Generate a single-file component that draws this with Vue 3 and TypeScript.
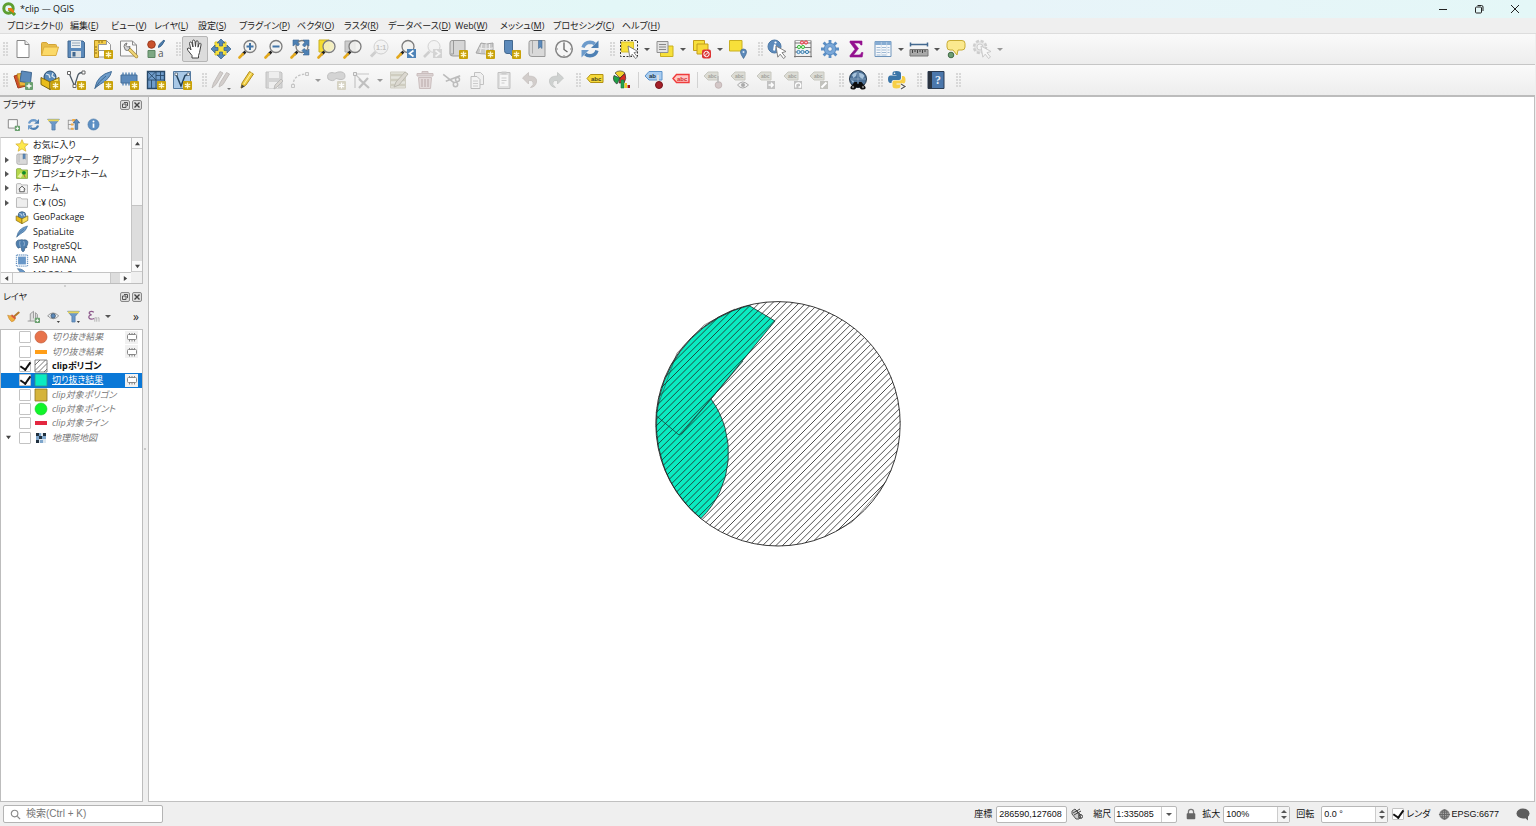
<script setup lang="ts">
import { ref } from 'vue'

interface Tool { icon: string; label: string; drop?: boolean; off?: boolean; on?: boolean }
interface Group { name: string; line?: boolean; tools: Tool[] }
interface Glyph { text: string; x: number; y: number; size: number; fill: string; family?: string; weight?: string }

const t = (icon: string, label: string, o: Partial<Tool> = {}): Tool => ({ icon, label, ...o })

const menus = [
  ['プロジェクト', 'J'], ['編集', 'E'], ['ビュー', 'V'], ['レイヤ', 'L'], ['設定', 'S'], ['プラグイン', 'P'], ['ベクタ', 'O'],
  ['ラスタ', 'R'], ['データベース', 'D'], ['Web', 'W'], ['メッシュ', 'M'], ['プロセシング', 'C'], ['ヘルプ', 'H'],
]

const bars: Group[][] = [
  [
    { name: 'file', tools: [t('new', '新規'), t('open', '開く'), t('save', '保存'), t('layout', '新規レイアウト'), t('manager', 'レイアウトマネージャ'), t('style', 'スタイルマネージャ')] },
    {
      name: 'nav', tools: [t('hand', '地図を移動', { on: true }), t('pansel', '選択部分に移動'), t('zin', '拡大'), t('zout', '縮小'), t('zfull', '全域表示'), t('zsel', '選択部分にズーム'),
        t('zlayer', 'レイヤにズーム'), t('znative', 'ネイティブ解像度', { off: true }), t('zlast', '前の表示'), t('znext', '次の表示', { off: true }), t('mapview', '新規地図ビュー'),
        t('view3d', '新規3Dビュー'), t('bookmark', '新規ブックマーク'), t('bookmarks', 'ブックマーク'), t('clock', '時系列'), t('refresh', '再読み込み')],
    },
    { name: 'sel', tools: [t('select', '地物選択', { drop: true }), t('selval', '値で選択', { drop: true }), t('desel', '選択解除', { drop: true }), t('selloc', '場所で選択')] },
    {
      name: 'attr', tools: [t('info', '地物情報'), t('abacus', 'フィールド計算機'), t('gear', 'ツールボックス'), t('sigma', '統計'), t('table', '属性テーブル', { drop: true }),
        t('ruler', '計測', { drop: true }), t('tip', '地図のヒント'), t('action', 'アクション', { drop: true, off: true })],
    },
  ],
  [
    { name: 'src', tools: [t('dsm', 'データソースマネージャ'), t('gpkg', '新規GeoPackage'), t('shp', '新規シェープファイル'), t('feather', '新規SpatiaLite'), t('memory', '新規一時レイヤ'), t('mesh', '新規メッシュ'), t('virtual', '新規仮想レイヤ')] },
    {
      name: 'edit', tools: [t('pencils', '現在の編集', { off: true }), t('pencil', '編集モード切替'), t('saveoff', '編集を保存', { off: true }), t('digit', 'デジタイズ', { drop: true, off: true }),
        t('addpoly', '地物を追加', { off: true }), t('vertex', '頂点ツール', { drop: true, off: true }), t('multi', '属性を変更', { off: true }), t('trash', '削除', { off: true }), t('cut', '切り取り', { off: true }),
        t('copy', 'コピー', { off: true }), t('paste', '貼り付け', { off: true }), t('undo', '元に戻す', { off: true }), t('redo', 'やり直し', { off: true })],
    },
    { name: 'lab', tools: [t('abc', 'ラベル'), t('diagram', 'ダイアグラム')] },
    { name: 'lab', line: true, tools: [t('abpin', 'ラベル固定'), t('abred', '未配置ラベル')] },
    { name: 'lab5', line: true, tools: [t('gpin', 'ラベルをピン', { off: true }), t('geye', 'ラベル表示', { off: true }), t('gmove', 'ラベル移動', { off: true }), t('grot', 'ラベル回転', { off: true }), t('gedit', 'ラベル変更', { off: true })] },
    { name: 'one', tools: [t('globe', 'メタサーチ')] },
    { name: 'one', tools: [t('python', 'Pythonコンソール')] },
    { name: 'one', tools: [t('help', 'ヘルプ')] },
    { name: 'none', tools: [] },
  ],
]

const grey: Glyph = { text: 'abc', x: 5, y: 8, size: 5, fill: '#a2a29b', weight: 'bold' }
const glyphs: Record<string, Glyph> = {
  style: { text: 'a', x: 12, y: 18, size: 10, fill: '#555', family: 'Open Sans' },
  znative: { text: '1:1', x: 7, y: 11, size: 7, fill: '#c2c2c2', weight: 'bold' },
  abc: { text: 'abc', x: 6, y: 11, size: 6, fill: '#4a4420', weight: 'bold' },
  abred: { text: 'abc', x: 6, y: 11, size: 6, fill: '#d42a2a', weight: 'bold' },
  abpin: { text: 'ab', x: 5, y: 8, size: 6, fill: '#223344', weight: 'bold' },
  gpin: grey, geye: grey, gmove: grey, grot: grey, gedit: grey,
  help: { text: '?', x: 9, y: 14, size: 12, fill: '#e2ebf5', family: 'Liberation Serif', weight: 'bold' },
}

const browser = [
  ['star', 'お気に入り', false], ['bookmarks', '空間ブックマーク', true], ['phome', 'プロジェクトホーム', true], ['home', 'ホーム', true], ['folder', 'C:¥ (OS)', true],
  ['box', 'GeoPackage', false], ['plume', 'SpatiaLite', false], ['elephant', 'PostgreSQL', false], ['chip', 'SAP HANA', false], ['mssql', 'MS SQL Server', false],
] as [string, string, boolean][]

const layers = ref([
  { name: '切り抜き結果', icon: 'l-orange', on: false, temp: true },
  { name: '切り抜き結果', icon: 'l-line', on: false, temp: true },
  { name: 'clipポリゴン', icon: 'l-hatch', on: true, temp: false },
  { name: '切り抜き結果', icon: 'l-teal', on: true, temp: true, current: true },
  { name: 'clip対象ポリゴン', icon: 'l-gold', on: false, temp: false },
  { name: 'clip対象ポイント', icon: 'l-green', on: false, temp: false },
  { name: 'clip対象ライン', icon: 'l-red', on: false, temp: false },
  { name: '地理院地図', icon: 'l-raster', on: false, temp: false, open: true },
] as { name: string; icon: string; on: boolean; temp: boolean; current?: boolean; open?: boolean }[])

const coord = ref('286590,127608')
const zoom = ref('100%')
const rotation = ref('0.0 °')
const render = ref(true)

// Diagonal fill of the circular clip polygon: parallel chords at 45 degrees.
const circle = { x: 778, y: 423.8, r: 122.2 }
const step = 4.7
let hatch = ''
for (let d = -Math.floor(circle.r / step) * step; d < circle.r; d += step) {
  const half = Math.sqrt(circle.r ** 2 - d ** 2) * Math.SQRT1_2
  const cx = circle.x + d * Math.SQRT1_2
  const cy = circle.y + d * Math.SQRT1_2
  hatch += `M${(cx - half).toFixed(1)} ${(cy + half).toFixed(1)}L${(cx + half).toFixed(1)} ${(cy - half).toFixed(1)}`
}
</script>

<template>
  <div class="app">
    <svg class="sprite" aria-hidden="true">
      <defs>
        <g id="badge"><rect x="11" y="11" width="9" height="9" rx="1" fill="#c9a20a" /><path d="M15.500 12.500v6M12.800 14l5.400 3M18.200 14l-5.400 3" stroke="#fff8d0" stroke-width="1.400" /></g>
        <g id="lens"><path d="M7.500 12.500L4.500 15.500" stroke="#222" stroke-width="2.600" /><path d="M4.800 15.200L1.500 18.500" stroke="#e3a81c" stroke-width="2.600" stroke-linecap="round" /><circle cx="12" cy="7.500" r="6" fill="#f1f1ee" fill-opacity=".85" stroke="#7d7d7d" stroke-width="1.300" /></g>
        <g id="gtag"><path d="M1 6l4-4h10v8H5z" fill="#dcdcd5" stroke="#c8c8c0" /></g>
        <g id="cursor"><path d="M9 7l10 5.500-4 1.200 3.500 4.300-2 1.500-3.300-4.300-2.400 3z" fill="#fff" stroke="#777" stroke-width=".9" /></g>
      </defs>
      <symbol id="new" viewBox="0 0 20 20"><path d="M4 1.500h8l4 4v13H4z" fill="#fff" stroke="#858585" /><path d="M12 1.500v4h4" fill="#eee" stroke="#858585" /></symbol>
      <symbol id="open" viewBox="0 0 20 20"><path d="M1.500 16V4.500q0-1 1-1h4l2 2h7q1 0 1 1V8" fill="#e8bd49" stroke="#d3a336" /><path d="M1.500 16.500L4 8h14.500l-2.500 8.500z" fill="#fbd968" stroke="#dcae40" /></symbol>
      <symbol id="save" viewBox="0 0 20 20"><path d="M2 2h15l1.500 1.500V18.500H2z" fill="#5c8abb" stroke="#41678f" /><path d="M5 2h10v7H5z" fill="#e9eef0" /><path d="M6 4h8M6 6.500h8" stroke="#9ab" /><path d="M5 12h10v6.500H5z" fill="#dadfe2" /><path d="M6.500 13h3v4.500h-3z" fill="#41678f" /></symbol>
      <symbol id="layout" viewBox="0 0 20 20"><path d="M4 5h12v13H4z" fill="#fff" stroke="#999" /><path d="M1.500 1.500h12v4h-8v13h-4z" fill="#f3cd4c" stroke="#b28c1e" /><path d="M13.500 1.500l4 4v6h-12v-6h8z" fill="#fff" stroke="#999" /><path d="M6 2v2M9 2v2M2 8h2M2 11h2M2 14h2" stroke="#8d6c10" /><use href="#badge" /></symbol>
      <symbol id="manager" viewBox="0 0 20 20"><path d="M1.500 2h12l4 4v11h-16z" fill="#fafafa" stroke="#8b8b8b" /><path d="M13.500 2v4h4" fill="none" stroke="#8b8b8b" /><path d="M10 10l7.500 7.500" stroke="#a8893a" stroke-width="3.400" stroke-linecap="round" /><path d="M10.500 10.500l7 7" stroke="#f1d878" stroke-width="2" stroke-linecap="round" /><path d="M5 7.500q0-3 3-3.500l-1 2.500 1.500 1.500L11 7.500q0 3-2.500 4T5 7.500z" fill="#d5d5d5" stroke="#777" /></symbol>
      <symbol id="style" viewBox="0 0 20 20"><circle cx="5.500" cy="5.500" r="3.800" fill="#c9512c" stroke="#9c3a1c" /><path d="M12.500 8.500q-.5-3 5.500-7.500l.5 1q-3 6-6 6.500" fill="#4d7eae" stroke="#3b658f" /><path d="M2 11.500h7v7H2z" fill="#7da883" stroke="#5c8562" /></symbol>
      <symbol id="hand" viewBox="0 0 20 20"><path d="M7 19v-2.500L3 11.500Q1.500 9.500 3 9t3 2L4.500 4.500Q4.500 3 5.500 3T7 4.500l1 3.500L7.500 2.500q0-1.500 1.100-1.500t1.400 1.500l.5 5 .4-4.500q.2-1.400 1.200-1.300t1.100 1.500l-.2 5 1-3.200q.5-1.200 1.400-.8t.6 1.800l-1.500 7.500-1 3V19z" fill="#fff" stroke="#444" stroke-linejoin="round" /></symbol>
      <symbol id="pansel" viewBox="0 0 20 20"><path d="M4 3h11v13H4z" fill="#f7e23d" stroke="#dac42c" /><path d="M10 0l4 4h-2.500v3h-3V4H6zM10 20l4-4h-2.500v-3h-3v3H6zM0 10l4-4v2.500h3v3H4V14zM20 10l-4-4v2.500h-3v3h3V14z" fill="#5387ba" stroke="#385f88" stroke-width=".7" /></symbol>
      <symbol id="zin" viewBox="0 0 20 20"><use href="#lens" /><path d="M12 4v7M8.500 7.500h7" stroke="#4275a8" stroke-width="2" /></symbol>
      <symbol id="zout" viewBox="0 0 20 20"><use href="#lens" /><path d="M8.500 7.500h7" stroke="#4275a8" stroke-width="2" /></symbol>
      <symbol id="zfull" viewBox="0 0 20 20"><use href="#lens" /><path d="M3 1h6L7.500 3l2 2L8 7 5.500 5.200 3 7zM19 1v6l-2-1.500L14.500 8l-2-2L15 3l-2-2zM19 16h-6l1.500-1.500-2.500-3 2-2 3 2.500 2-2z" fill="#4d80b3" stroke="#3a6593" stroke-width=".6" /></symbol>
      <symbol id="zsel" viewBox="0 0 20 20"><path d="M2 1h10v12H2z" fill="#f5dc30" stroke="#c9b022" /><use href="#lens" /><circle cx="12" cy="7.500" r="5" fill="#f5eda0" opacity=".6" /></symbol>
      <symbol id="zlayer" viewBox="0 0 20 20"><path d="M2 2h10v11H2z" fill="#ccc" stroke="#aaa" /><use href="#lens" /></symbol>
      <symbol id="znative" viewBox="0 0 20 20"><g opacity=".28"><circle cx="12" cy="8" r="7" fill="#eee" stroke="#777" /><path d="M6.500 13L2 17.500" stroke="#777" stroke-width="3" /></g></symbol>
      <symbol id="zlast" viewBox="0 0 20 20"><use href="#lens" /><path d="M11 10h9v9h-9z" fill="#4e83b7" /><path d="M17.500 11.500l-4 3 4 3" fill="none" stroke="#fff" stroke-width="1.600" /></symbol>
      <symbol id="znext" viewBox="0 0 20 20"><g opacity=".28"><circle cx="12" cy="7.500" r="6" fill="#eee" stroke="#777" /><path d="M7.500 12.500L2 18" stroke="#777" stroke-width="2.600" /><path d="M11 10h9v9h-9z" fill="#888" /><path d="M13.500 11.500l4 3-4 3" fill="none" stroke="#fff" stroke-width="1.600" /></g></symbol>
      <symbol id="mapview" viewBox="0 0 20 20"><path d="M2 4q0-2.500 2-2.500h13V17H5q-3 0-3-2z" fill="#d6d6d6" stroke="#999" /><path d="M5.500 2v13H3" fill="none" stroke="#999" /><use href="#badge" /></symbol>
      <symbol id="view3d" viewBox="0 0 20 20"><path d="M6 4q5 2 12 0v10q-6 2-17 0z" fill="#c9c9c9" stroke="#a5a5a5" /><path d="M4 9q7 2 14 0M11 5v10M14.500 5v10M7 5L5 14" fill="none" stroke="#eee" /><use href="#badge" /></symbol>
      <symbol id="bookmark" viewBox="0 0 20 20"><path d="M3.500 1.500h8v16l-2.500-3H6q-2.500 0-2.500-3z" fill="#5c8abb" stroke="#44698f" /><use href="#badge" /></symbol>
      <symbol id="bookmarks" viewBox="0 0 20 20"><path d="M2 3.500q0-2 2-2h14v16H5q-3 0-3-2.500z" fill="#d9d9d9" stroke="#999" /><path d="M5.500 2v12.500" stroke="#aaa" /><path d="M11.500 1.500h3.500v8l-1.700-1.500-1.800 1.500z" fill="#5c8abb" stroke="#44698f" stroke-width=".6" /></symbol>
      <symbol id="clock" viewBox="0 0 20 20"><circle cx="10" cy="10" r="8.300" fill="#f6f6f6" stroke="#858585" stroke-width="1.500" /><path d="M10 4v6.500l3.500 2.500" fill="none" stroke="#666" stroke-width="1.300" /><path d="M10 2.500v1.500M10 16v1.500M2.500 10H4M16 10h1.500" stroke="#888" /></symbol>
      <symbol id="refresh" viewBox="0 0 20 20"><path d="M3 8.500Q4.500 3.500 10 3.200q2.800 0 4.800 1.800" fill="none" stroke="#6d9bcb" stroke-width="3.400" /><path d="M18.500 1.500v7.500h-7.500z" fill="#4d80b4" /><path d="M17 11.500q-1.500 5-7 5.300-2.800 0-4.800-1.800" fill="none" stroke="#4d80b4" stroke-width="3.400" /><path d="M1.500 18.500V11H9z" fill="#6d9bcb" /></symbol>
      <symbol id="select" viewBox="0 0 20 20"><path d="M1.500 1.500h17v16h-17z" fill="none" stroke="#333" stroke-dasharray="2 1.500" /><path d="M2.500 3h12v10h-12z" fill="#f7e03a" stroke="#d6bf2c" /><use href="#cursor" /></symbol>
      <symbol id="selval" viewBox="0 0 20 20"><path d="M5.500 7h12.500v10.500H5.500z" fill="#f7e03a" stroke="#c9b021" /><path d="M2 2.500h11v11H2z" fill="#e3e3e3" stroke="#8f8f8f" /><path d="M4 5.500h7M4 8h7M4 10.500h7" stroke="#888" /></symbol>
      <symbol id="desel" viewBox="0 0 20 20"><path d="M1.500 1.500h11v10h-11z" fill="#f7e03a" stroke="#c39d1d" /><path d="M5 5h11v10H5z" fill="#f7d93a" stroke="#c39d1d" /><rect x="10" y="10.500" width="9" height="9" rx="2" fill="#dc3434" /><circle cx="14.500" cy="15" r="2.700" fill="none" stroke="#fff" /><path d="M12.500 17l4-4" stroke="#fff" /></symbol>
      <symbol id="selloc" viewBox="0 0 20 20"><path d="M1.500 1.500h12.500v10.500H1.500z" fill="#f7e03a" stroke="#c9b021" /><path d="M15.500 19.500q-3-4.500-3-6.500a3 3 0 016 0q0 2-3 6.500z" fill="#5c8abb" stroke="#44698f" stroke-width=".7" /><circle cx="15.500" cy="13" r="1" fill="#dfeaf4" /></symbol>
      <symbol id="info" viewBox="0 0 20 20"><circle cx="7.500" cy="7.500" r="6.500" fill="#5c8abb" stroke="#4b78a6" /><path d="M8 5.500L7 11.500" stroke="#fff" stroke-width="2" /><circle cx="8.500" cy="3.500" r="1.100" fill="#fff" /><use href="#cursor" /></symbol>
      <symbol id="abacus" viewBox="0 0 20 20"><path d="M2 1.500v17M18 1.500v17M2 4h16M2 8.500h16M2 13h16M1 17.500h18" fill="none" stroke="#777" /><path d="M2 1.500h16" stroke="#aaa" /><g stroke-width="1"><g fill="#fbd" stroke="#d33"><circle cx="9" cy="3.500" r="1.600" /><circle cx="13" cy="3.500" r="1.600" /></g><g fill="#cfc" stroke="#4b4"><circle cx="6" cy="8" r="1.600" /><circle cx="10" cy="8" r="1.600" /></g><g fill="#cfeaff" stroke="#3a7faf"><circle cx="5.500" cy="13" r="1.600" /><circle cx="9.500" cy="13" r="1.600" /><circle cx="14" cy="13" r="1.600" /></g></g></symbol>
      <symbol id="gear" viewBox="0 0 20 20"><path d="M10 1v18M1 10h18M3.600 3.600l12.800 12.800M16.400 3.600L3.600 16.400" stroke="#5b8ec4" stroke-width="2.800" /><circle cx="10" cy="10" r="5.800" fill="#79a7d8" stroke="#5b8ec4" /><circle cx="10" cy="10" r="2.300" fill="#f5f5f5" stroke="#5b8ec4" /></symbol>
      <symbol id="sigma" viewBox="0 0 20 20"><path d="M4 2h12v4h-1.200q-.3-2-2.300-2H8l4.500 5.500L7.500 16h5.500q2 0 2.500-2.500H17L16.200 18H4v-1.500l5-6.300-5-6.700z" fill="#93108f" stroke="#93108f" stroke-width=".6" /></symbol>
      <symbol id="table" viewBox="0 0 20 20"><path d="M2 2.500h16v15H2z" fill="#f7f9fb" stroke="#6e94bb" /><path d="M2 2.500h16v3.500H2z" fill="#86acd3" /><path d="M3.500 8.500h4M9 8.500h4M14.500 8.500h2M3.500 11h4M9 11h4M14.500 11h2M3.500 13.500h4M9 13.500h4M14.500 13.500h2M3.500 16h4M9 16h4" stroke="#9fb9d4" /><path d="M8.300 3v14M13.700 3v14" stroke="#c5d5e5" stroke-width=".7" /></symbol>
      <symbol id="ruler" viewBox="0 0 20 20"><path d="M1 5.500h18M1.500 3.500v4M18.500 3.500v4" stroke="#42688f" stroke-width="1.500" /><path d="M1 10.500h18v6.500H1z" fill="#a9a9a9" stroke="#777" /><path d="M3.500 11v3M6 11v2M8.500 11v3M11 11v2M13.500 11v3M16 11v2" stroke="#444" /></symbol>
      <symbol id="tip" viewBox="0 0 20 20"><path d="M4 1.500h12q3 0 3 3v3.500q0 3-3 3h-4l-1 5-4-5H4q-3 0-3-3V4.500q0-3 3-3z" fill="#fbe98e" stroke="#c8ac35" /><circle cx="5" cy="16" r="2.800" fill="#6c9c72" stroke="#426b48" /></symbol>
      <symbol id="action" viewBox="0 0 20 20"><g opacity=".35"><circle cx="8" cy="8" r="6" fill="#ccc" stroke="#888" stroke-width="2.500" stroke-dasharray="3 1.700" /><circle cx="8" cy="8" r="3" fill="#f5f5f5" stroke="#888" /><use href="#cursor" /></g></symbol>

      <symbol id="dsm" viewBox="0 0 20 20"><path d="M1 6l9-2 3 12-8 2z" fill="#d0512a" stroke="#a23b1a" /><path d="M4 4l10-1 1 12-8 1z" fill="#efb63a" stroke="#b88621" /><path d="M8.500 1l10 1.500-1 10.500L7 11.500z" fill="#5c8abb" stroke="#3f668f" /><rect x="12" y="12" width="8" height="8" rx="1" fill="#6aa06f" /><path d="M16 13.500v5M13.500 16h5" stroke="#fff" stroke-width="1.400" /></symbol>
      <symbol id="box" viewBox="0 0 20 20"><circle cx="10" cy="7" r="6" fill="#5889b9" stroke="#284a6c" /><path d="M6 4l3 1 1 3M13 3l-1 3 3 2" fill="none" stroke="#d8e6ef" stroke-width="1.300" /><path d="M1 7.500l9 4.500v7.500l-9-5z" fill="#e9bd1c" stroke="#7c6510" /><path d="M19 7.500l-9 4.500v7.500l9-5z" fill="#fbe15a" stroke="#7c6510" /></symbol>
      <symbol id="gpkg" viewBox="0 0 20 20"><use href="#box" width="20" height="20" /><use href="#badge" /></symbol>
      <symbol id="shp" viewBox="0 0 20 20"><path d="M3 3l5.500 13L12 5q1-2.500 5-2.500" fill="none" stroke="#4c5a66" stroke-width="1.300" /><path d="M1.500 1.500h3v3h-3zM16 1h3v3h-3zM7 14.500h3v3H7z" fill="#fff" stroke="#666" /><use href="#badge" /></symbol>
      <symbol id="plume" viewBox="0 0 20 20"><path d="M2 18Q4 5 18.500 1.500 17 9 7.500 14z" fill="#6d9cca" stroke="#456f99" /><path d="M1.500 19Q6 11 13 6" fill="none" stroke="#3d678f" /></symbol>
      <symbol id="feather" viewBox="0 0 20 20"><use href="#plume" width="20" height="20" /><use href="#badge" /></symbol>
      <symbol id="memory" viewBox="0 0 20 20"><path d="M4 2.500v13M7 2.500v13M10 2.500v13M13 2.500v13M16 2.500v13" stroke="#5c8abb" stroke-width="1.500" /><path d="M2 5h16v8H2z" fill="#5c8abb" stroke="#456f99" /><use href="#badge" /></symbol>
      <symbol id="mesh" viewBox="0 0 20 20"><path d="M1.500 1.500h17v17h-17z" fill="#6f9ccb" stroke="#28496a" stroke-width="1.400" /><path d="M10 1.500v17M1.500 10h17M1.500 1.500L10 10M10 1.500L1.500 10M14.500 1.500v8.500M10 5.500h8.500M5.500 10v8.500" stroke="#28496a" stroke-width=".9" /><use href="#badge" /></symbol>
      <symbol id="virtual" viewBox="0 0 20 20"><path d="M1.500 1.500h17v17h-17z" fill="#a9c8e6" stroke="#54799f" /><path d="M4 4l5 12L13 5.500 17 4" fill="none" stroke="#24435f" stroke-width="1.500" /><path d="M3 3h2.500v2.500H3zM15 3h2.500v2.500H15z" fill="#fff" stroke="#456" stroke-width=".7" /><use href="#badge" /></symbol>
      <symbol id="pencils" viewBox="0 0 20 20"><path d="M1 18l1.500-5L9 1.500l3 1.500L5 14.500zM8 17l1-4 6.500-10.500 3 1.500L12 14.500z" fill="#d3cecc" stroke="#c2bebc" /><path d="M16 18h4l-2 2z" fill="#777" /></symbol>
      <symbol id="pencil" viewBox="0 0 20 20"><path d="M4 18l1-5L12.500 1.500 16.500 4 9 15z" fill="#f0cf42" stroke="#b28c20" /><path d="M14.500 2.500L7 14" stroke="#fff0a8" /><path d="M4 18.500l.8-4 3 2z" fill="#444" /></symbol>
      <symbol id="saveoff" viewBox="0 0 20 20"><path d="M2 2h15l1 1v15H2z" fill="#d4d4d4" stroke="#c2c2c2" /><path d="M5 2h10v6H5zM5 12h9v6H5z" fill="#eee" /><path d="M10 19l1-4 6-6 2 2-6 6z" fill="#d9d6d2" stroke="#bbb" /></symbol>
      <symbol id="digit" viewBox="0 0 20 20"><path d="M3 16Q3 4 17 4" fill="none" stroke="#c4c4c4" stroke-dasharray="2.500 1.500" stroke-width="1.300" /><path d="M1.500 14.500h3v3h-3zM15.500 2.500h3v3h-3z" fill="#eee" stroke="#c4c4c4" /></symbol>
      <symbol id="addpoly" viewBox="0 0 20 20"><path d="M2 9Q0 3 6 2.500q3 1.500 6-.5 7-1 7 4 0 4-5 3.500l-4-1q-3 4-8 .5z" fill="#d4d4d4" stroke="#c0c0c0" /><rect x="11" y="11" width="9" height="9" rx="1" fill="#d6d3c4" /><path d="M15.500 12.500v6M12.800 14l5.400 3M18.200 14l-5.400 3" stroke="#fff" stroke-width="1.300" /></symbol>
      <symbol id="vertex" viewBox="0 0 20 20"><path d="M3 18V4h14M3 4l6 6" fill="none" stroke="#c5c5c5" stroke-width="1.200" /><path d="M1.500 2.500h3v3h-3z" fill="#eee" stroke="#b5b5b5" /><path d="M7 9l10 9M16 8l-9 10" stroke="#c0c0c0" stroke-width="2.200" /></symbol>
      <symbol id="multi" viewBox="0 0 20 20"><path d="M1.500 2h15v16h-15z" fill="#e5e4de" stroke="#cfcdc2" /><path d="M2 5h14M2 10h14M2 15h14" stroke="#cfcdc0" stroke-width="2.500" /><path d="M5 17l2-5L16 2l3 2-9 11z" fill="#dbd8d0" stroke="#bbb9b0" /></symbol>
      <symbol id="trash" viewBox="0 0 20 20"><path d="M2 3.500h16v2.500H2zM7 1.500h6v2H7z" fill="#dcd3d3" stroke="#cabebe" /><path d="M3.500 7.500h13L15.500 18.500h-11z" fill="#e2d9d9" stroke="#cabebe" /><path d="M7 9v8M10 9v8M13 9v8" stroke="#c4b6b6" stroke-width="1.400" /></symbol>
      <symbol id="cut" viewBox="0 0 20 20"><path d="M1.500 5.500l12 7M5 12L18.500 4.500" fill="none" stroke="#bcbcbc" stroke-width="1.600" transform="rotate(8 10 10)" /><circle cx="14.500" cy="14.500" r="2.200" fill="none" stroke="#bcbcbc" stroke-width="1.500" /><circle cx="16.500" cy="9.500" r="2" fill="none" stroke="#bcbcbc" stroke-width="1.500" /></symbol>
      <symbol id="copy" viewBox="0 0 20 20"><path d="M7.500 2.500h6l3 3v9h-9z" fill="#f0f0f0" stroke="#c2c2c2" /><path d="M4 6.500h6l3 3v9H4z" fill="#f3f3f3" stroke="#bdbdbd" /><path d="M6 11h5M6 13.500h5M6 16h5" stroke="#ccc" /></symbol>
      <symbol id="paste" viewBox="0 0 20 20"><path d="M4 2.500h12v16H4z" fill="#e0e0e0" stroke="#c0c0c0" /><path d="M6 5h8v11H6z" fill="#f6f6f6" /><path d="M7.500 1.500h5v3h-5z" fill="#ccc" /><path d="M7.500 8h5M7.500 10.500h5M7.500 13h3" stroke="#ccc" /></symbol>
      <symbol id="undo" viewBox="0 0 20 20"><path d="M2.500 8l6-5.500v3.500q9 0 8 6-1 5-6 5.500 4-3 2.500-5.500Q12 10 8.500 10.500v3.500z" fill="#d2cdcb" stroke="#c5c0be" stroke-width=".8" /></symbol>
      <symbol id="redo" viewBox="0 0 20 20"><path d="M17.500 8l-6-5.500v3.500q-9 0-8 6 1 5 6 5.500-4-3-2.500-5.500Q8 10 11.500 10.500v3.500z" fill="#ced1d0" stroke="#c1c4c3" stroke-width=".8" /></symbol>
      <symbol id="abc" viewBox="0 0 20 20"><path d="M2 8.500l3.500-4H18v8H5.500z" fill="#f5d93a" stroke="#b29112" /></symbol>
      <symbol id="diagram" viewBox="0 0 20 20"><path d="M8 8L2 5.500A6.500 6.500 0 005 14z" fill="#1da045" stroke="#222" stroke-width=".6" /><path d="M8 8L3 3a7 7 0 0110 0z" fill="#f0d12c" stroke="#222" stroke-width=".6" /><path d="M8 8l5-4.500q2 5-1 9.500H7z" fill="#d92b22" stroke="#222" stroke-width=".6" /><path d="M9 10h3v8H9z" fill="#23a34b" stroke="#174" stroke-width=".6" /><path d="M12.500 13h2.500v5h-2.500z" fill="#efc92a" /><path d="M15.500 15H18v3h-2.500z" fill="#a11717" /></symbol>
      <symbol id="abpin" viewBox="0 0 20 20"><path d="M1 6l4-4.500h13v8.500H5z" fill="#a9cdf1" stroke="#5b92ca" /><path d="M14 5v8" stroke="#ddd" stroke-width="2" /><circle cx="15" cy="15" r="3.500" fill="#a51f28" stroke="#76131a" /></symbol>
      <symbol id="abred" viewBox="0 0 20 20"><path d="M2 8.500l3.500-4H18v8H5.500z" fill="#ffc9c6" stroke="#ef3c3c" stroke-width="1.400" /></symbol>
      <symbol id="gpin" viewBox="0 0 20 20"><use href="#gtag" /><circle cx="15.500" cy="15" r="3.300" fill="#d3c7c7" stroke="#c4b6b6" /><path d="M15 6v7" stroke="#bbb" stroke-width="1.500" /></symbol>
      <symbol id="geye" viewBox="0 0 20 20"><use href="#gtag" /><path d="M7.500 15q5-6 11 0-6 6-11 0z" fill="#efefef" stroke="#aaa" /><circle cx="13" cy="15" r="2" fill="#aaa" /></symbol>
      <symbol id="gmove" viewBox="0 0 20 20"><use href="#gtag" /><path d="M11 11h8v8h-8z" fill="#c2c2c2" /><path d="M12.500 15h4.500M15 12.800l2.200 2.200-2.200 2.200" fill="none" stroke="#fff" stroke-width="1.400" /></symbol>
      <symbol id="grot" viewBox="0 0 20 20"><use href="#gtag" /><path d="M11 11h8v8h-8z" fill="#c2c2c2" /><path d="M13 17.500q-1.500-4 2-4.500t2.500 4h-2" fill="none" stroke="#fff" stroke-width="1.300" /></symbol>
      <symbol id="gedit" viewBox="0 0 20 20"><use href="#gtag" /><path d="M11 11h8v8h-8z" fill="#c2c2bd" /><path d="M12.500 17.500l5-5" stroke="#fff" stroke-width="2" /></symbol>
      <symbol id="globe" viewBox="0 0 20 20"><circle cx="10" cy="9" r="8.500" fill="#4d7298" stroke="#24384c" /><path d="M4 5q2-3 5-2.500L8 6 5.500 8zM11 3q4 0 5.500 3l-2 3-3-2zM3 10l3 1-1 2z" fill="#a8c4dc" /><path d="M2 9h16M10 1v16" stroke="#9db5cc" stroke-width=".6" /><path d="M6.500 12h2.500l.5 2h1l.5-2h2.500l4 5q.5 2.500-2.500 2.500T12 17.500H8Q8 19.500 5 19.500T2.500 17z" fill="#0c0c0c" /><circle cx="5" cy="17" r="1.200" fill="#777" /><circle cx="15" cy="17" r="1.200" fill="#777" /></symbol>
      <symbol id="python" viewBox="0 0 20 20"><path d="M9.500 1q4.500 0 4.500 2.500V8q0 2-2 2H7q-2.500 0-2.500 3H3q-2-.5-2-4t2.500-3.500h6V5h-4V3q0-2 4-2z" fill="#3a75a8" /><circle cx="7.500" cy="3.200" r=".8" fill="#fff" /><path d="M9.500 18.500Q5.500 18.500 5.500 16v-3.500q0-2 2-2h5.500q2 0 2-3V6h1.500q2 .5 2 4t-2.500 3.500H9.500v1h4V16q0 2.500-4 2.500z" fill="#f7cf46" /><path d="M14 14l4 2.500-4 2.500" fill="none" stroke="#fff" stroke-width="2.600" /><path d="M14 14l4 2.500-4 2.500" fill="none" stroke="#555" stroke-width="1.200" /></symbol>
      <symbol id="help" viewBox="0 0 20 20"><path d="M2 1.500h16v17H2z" fill="#4b77ab" stroke="#2c3d54" /><path d="M2 1.500h4v17H2z" fill="#2a3441" /></symbol>

      <symbol id="star" viewBox="0 0 20 20"><path d="M10 1l2.700 6.200 6.800.6-5.200 4.400 1.700 6.600L10 15.200 4 18.800l1.700-6.600L.5 7.800l6.800-.6z" fill="#fde94c" stroke="#d1a727" /></symbol>
      <symbol id="phome" viewBox="0 0 20 20"><path d="M1.500 4q0-1.500 1.500-1.500h5l1.500 2h9v13h-17z" fill="#b5d84b" stroke="#6e9428" /><path d="M3 15l5-6 3 3-3 5z" fill="#e9f2a6" /><circle cx="13" cy="9" r="3" fill="#108a2a" /><path d="M13 12l2 4" stroke="#b22" /></symbol>
      <symbol id="folder" viewBox="0 0 20 20"><path d="M1.500 4q0-1.500 1.500-1.500h5l1.500 2h9v13h-17z" fill="#eee" stroke="#999" /></symbol>
      <symbol id="home" viewBox="0 0 20 20"><use href="#folder" width="20" height="20" /><path d="M5 11l5-4.500 5 4.500M6.500 10.500V15h7v-4.500" fill="#fff" stroke="#444" stroke-width="1.300" /></symbol>
      <symbol id="elephant" viewBox="0 0 20 20"><path d="M1 7q0-6 6-5.500 3-1 5 0 7-1 7 4 0 4-3 7h2l-2.500 1.500-1.500-.5q.5 6-2.500 6-2.500 0-2.500-6l-2-1Q4 16 2.500 12 1 10 1 7z" fill="#4f7fae" stroke="#34597f" /><path d="M7 3q-1.500 4 .5 9M12.500 3q2.500 4 .5 8" fill="none" stroke="#b5cbe0" /></symbol>
      <symbol id="chip" viewBox="0 0 20 20"><path d="M2 1.500h16M2 18.500h16M1.500 2v16M18.500 2v16" stroke="#5c8abb" stroke-width="2" stroke-dasharray="1.500 1.500" /><path d="M4 4h12v12H4z" fill="#6796c7" /></symbol>
      <symbol id="mssql" viewBox="0 0 20 20"><path d="M3 1q10 0 14 9l-5 8Q9 6 3 1z" fill="#6796c7" stroke="#3d678f" /></symbol>
      <symbol id="addsel" viewBox="0 0 20 20"><path d="M2 2.500h14v13H2z" fill="#fafafa" stroke="#777" stroke-width="1.300" /><rect x="12" y="12" width="8" height="8" rx="1" fill="#6aa06f" /><path d="M16 13.500v5M13.500 16h5" stroke="#fff" stroke-width="1.400" /></symbol>
      <symbol id="filter" viewBox="0 0 20 20"><path d="M1 2h18L12.500 10v8.500h-5V10z" fill="#6b98c9" stroke="#4a75a3" /><path d="M1.500 2h17v3h-17z" fill="#e6d35c" /></symbol>
      <symbol id="collapse" viewBox="0 0 20 20"><path d="M2 3.500h9M2 3v14h9M2 10h8" fill="none" stroke="#777" /><path d="M8 1.500h5v4H8zM6 8.500h4v3H6zM6 15h4v3H6z" fill="#f1aa45" /><path d="M14.500 1.500l5 6h-3v10h-4v-10h-3z" fill="#5c8abb" stroke="#3b618a" /></symbol>
      <symbol id="about" viewBox="0 0 20 20"><circle cx="10" cy="10" r="8.500" fill="#5c8fc4" stroke="#4a78a8" /><path d="M10 8.500v6.500" stroke="#fff" stroke-width="2.600" /><circle cx="10" cy="5.500" r="1.500" fill="#fff" /></symbol>
      <symbol id="brush" viewBox="0 0 20 20"><path d="M11 10l7-6" stroke="#b37a2a" stroke-width="3" stroke-linecap="round" /><path d="M1 8q4 2 6 0l6 5q-2 5-6 5Q3 15 1 8z" fill="#f0b040" stroke="#c98a32" /><path d="M7 8l6 5" stroke="#d65a3c" stroke-width="3" /></symbol>
      <symbol id="group" viewBox="0 0 20 20"><path d="M1 17h15V7l-3-3v9M5 17V6l5-4v11" fill="#ddd" stroke="#888" stroke-width="1.200" /><rect x="12" y="12" width="8" height="8" rx="1" fill="#6aa06f" /><path d="M16 13.500v5M13.500 16h5" stroke="#fff" stroke-width="1.300" /></symbol>
      <symbol id="eye" viewBox="0 0 20 20"><path d="M1 9Q9 0 18 9q-8 9-17 0z" fill="#e9eef3" stroke="#888" stroke-width="1.300" /><circle cx="9.500" cy="9" r="3.500" fill="#5c8abb" stroke="#345" /><path d="M15 17h5l-2.500 3z" fill="#444" /></symbol>
      <symbol id="filter2" viewBox="0 0 20 20"><use href="#filter" width="20" height="20" /><path d="M15 17h5l-2.500 3z" fill="#444" /></symbol>
      <symbol id="epsilon" viewBox="0 0 20 20"><path d="M10.500 3.500Q7 1 4 3q-2 3 3 4.500-5 1-4 4.500 2.500 3.500 8 1" fill="none" stroke="#8d5a8c" stroke-width="1.900" /><path d="M12 18v-6h3v6M16.500 12h2v6" fill="none" stroke="#aaa" stroke-width="1.300" /></symbol>

      <symbol id="l-orange" viewBox="0 0 14 14"><circle cx="7" cy="7" r="6" fill="#e8734b" stroke="#c25c3a" stroke-width=".7" /></symbol>
      <symbol id="l-line" viewBox="0 0 14 14"><path d="M1 5h12v4H1z" fill="#ff9e17" /></symbol>
      <symbol id="l-hatch" viewBox="0 0 14 14"><path d="M1 1h12v12H1z" fill="#fff" stroke="#666" stroke-width=".8" /><path d="M1 6l5-5M1 11.500L11.500 1M4.500 13L13 4.500M10 13l3-3" stroke="#555" stroke-width=".8" /></symbol>
      <symbol id="l-teal" viewBox="0 0 14 14"><path d="M1 1h12v12H1z" fill="#0aebc1" stroke="#3a8f80" stroke-width=".8" /></symbol>
      <symbol id="l-gold" viewBox="0 0 14 14"><path d="M1 1h12v12H1z" fill="#d5b43c" stroke="#8c7427" stroke-width=".8" /></symbol>
      <symbol id="l-green" viewBox="0 0 14 14"><circle cx="7" cy="7" r="6" fill="#10f52a" stroke="#22c234" stroke-width=".6" /></symbol>
      <symbol id="l-red" viewBox="0 0 14 14"><path d="M1 5h12v4H1z" fill="#e32740" /></symbol>
      <symbol id="l-raster" viewBox="0 0 14 14"><path d="M2 2h10v10H2z" fill="#dbe6ef" /><path d="M2 2h3v3H2zM9 2h3v3H9zM5 5h3v3H5zM2 9h3v3H2z" fill="#20303f" /><path d="M5 2h2v3H5zM8 5h4v3H8zM2 5h3v4H2zM6 9h3v3H6z" fill="#7ea6cc" /></symbol>
    </svg>

    <header class="title">
      <svg class="logo" viewBox="0 0 14 14"><circle cx="6.500" cy="6.500" r="4.700" fill="none" stroke="#5c9f32" stroke-width="3" /><path d="M7 7l6 6" stroke="#5c9f32" stroke-width="3.200" /><path d="M6 6h3.500L12 8.500v3L6 7.500z" fill="#ee7913" /></svg>
      <span class="caption">*clip — QGIS</span>
      <button class="win" aria-label="最小化"><svg viewBox="0 0 12 12"><path d="M2 6.500h8" stroke="#222" /></svg></button>
      <button class="win" aria-label="元のサイズに戻す"><svg viewBox="0 0 12 12"><rect x="2.500" y="4" width="6" height="6" rx="1" fill="none" stroke="#222" /><path d="M4.500 2.500h4q1.500 0 1.500 1.500v4" fill="none" stroke="#222" /></svg></button>
      <button class="win" aria-label="閉じる"><svg viewBox="0 0 12 12"><path d="M2 2l8 8M10 2l-8 8" stroke="#222" /></svg></button>
    </header>

    <nav class="menu">
      <button v-for="m in menus" :key="m[1]">{{ m[0] }}(<u>{{ m[1] }}</u>)</button>
    </nav>

    <div v-for="(bar, b) in bars" :key="b" class="bar">
      <template v-for="(g, i) in bar" :key="i">
        <span :class="g.line ? 'divider' : 'grip'"></span>
        <div class="group" :class="'g-' + g.name">
          <button v-for="tool in g.tools" :key="tool.icon" class="tool" :class="{ drop: tool.drop, on: tool.on, off: tool.off }" :aria-label="tool.label" :disabled="tool.off">
            <svg class="ic" viewBox="0 0 20 20"><use :href="'#' + tool.icon" width="20" height="20" /><text v-if="glyphs[tool.icon]" :x="glyphs[tool.icon].x" :y="glyphs[tool.icon].y" :font-size="glyphs[tool.icon].size" :fill="glyphs[tool.icon].fill" :font-family="glyphs[tool.icon].family || 'Liberation Sans'" :font-weight="glyphs[tool.icon].weight || 'normal'">{{ glyphs[tool.icon].text }}</text></svg><i v-if="tool.drop" class="tri"></i>
          </button>
        </div>
      </template>
    </div>

    <main class="body">
      <aside class="docks">
        <section class="dock browser">
          <h2>ブラウザ
            <button aria-label="ブラウザを分離"><svg viewBox="0 0 10 10"><rect x=".5" y=".5" width="9" height="9" rx="1.500" fill="#ddd" stroke="#888" /><path d="M4 2.500h3.500V6M2.500 4h3.500v3.500H2.500z" fill="none" stroke="#555" /></svg></button>
            <button aria-label="ブラウザを閉じる"><svg viewBox="0 0 10 10"><rect x=".5" y=".5" width="9" height="9" rx="1.500" fill="#ddd" stroke="#888" /><path d="M2.500 2.500l5 5M7.500 2.500l-5 5" stroke="#444" stroke-width="1.400" /></svg></button>
          </h2>
          <div class="mini">
            <button aria-label="レイヤを追加"><svg><use href="#addsel" /></svg></button>
            <button aria-label="更新"><svg><use href="#refresh" /></svg></button>
            <button aria-label="ブラウザをフィルタ"><svg><use href="#filter" /></svg></button>
            <button aria-label="すべて折りたたむ"><svg><use href="#collapse" /></svg></button>
            <button aria-label="プロパティ"><svg><use href="#about" /></svg></button>
          </div>
          <div class="tree">
            <div class="view">
              <ul class="rows ten">
                <li v-for="r in browser" :key="r[1]">
                  <span class="twist"><svg v-if="r[2]" viewBox="0 0 6 8"><path d="M1 1l4 3-4 3z" fill="#555" /></svg></span>
                  <svg class="node"><use :href="'#' + r[0]" /></svg><span>{{ r[1] }}</span>
                </li>
              </ul>
            </div>
            <div class="vscroll"><button aria-label="上へ"><svg viewBox="0 0 8 6"><path d="M1 5l3-4 3 4z" fill="#444" /></svg></button><span class="vthumb"></span><button aria-label="下へ"><svg viewBox="0 0 8 6"><path d="M1 1l3 4 3-4z" fill="#444" /></svg></button></div>
            <div class="hscroll"><button aria-label="左へ"><svg viewBox="0 0 6 8"><path d="M5 1L1 4l4 3z" fill="#444" /></svg></button><span class="hthumb"></span><button aria-label="右へ"><svg viewBox="0 0 6 8"><path d="M1 1l4 3-4 3z" fill="#444" /></svg></button></div>
            <div class="corner"></div>
          </div>
        </section>
        <div class="split"></div>
        <section class="dock layers">
          <h2>レイヤ
            <button aria-label="レイヤを分離"><svg viewBox="0 0 10 10"><rect x=".5" y=".5" width="9" height="9" rx="1.500" fill="#ddd" stroke="#888" /><path d="M4 2.500h3.500V6M2.500 4h3.500v3.500H2.500z" fill="none" stroke="#555" /></svg></button>
            <button aria-label="レイヤを閉じる"><svg viewBox="0 0 10 10"><rect x=".5" y=".5" width="9" height="9" rx="1.500" fill="#ddd" stroke="#888" /><path d="M2.500 2.500l5 5M7.500 2.500l-5 5" stroke="#444" stroke-width="1.400" /></svg></button>
          </h2>
          <div class="mini">
            <button aria-label="レイヤスタイル"><svg><use href="#brush" /></svg></button>
            <button aria-label="グループを追加"><svg><use href="#group" /></svg></button>
            <button aria-label="地図テーマ"><svg><use href="#eye" /></svg></button>
            <button aria-label="凡例をフィルタ"><svg><use href="#filter2" /></svg></button>
            <button aria-label="式でフィルタ" class="wide"><svg><use href="#epsilon" /></svg><i class="tri"></i></button>
            <button class="more" aria-label="その他">»</button>
          </div>
          <div class="list">
            <ul class="rows eight">
              <li v-for="(l, i) in layers" :key="i" :class="{ current: l.current, shown: l.on }">
                <span class="fold"><svg v-if="l.open" viewBox="0 0 8 6"><path d="M1 1l3 4 3-4z" fill="#444" /></svg></span>
                <input :id="'layer' + i" v-model="l.on" type="checkbox" class="tick">
                <svg class="sym"><use :href="'#' + l.icon" /></svg>
                <label :for="'layer' + i">{{ l.name }}</label>
                <button v-if="l.temp" class="temp" aria-label="一時レイヤ"><svg viewBox="0 0 12 10"><rect x="1.500" y="2.500" width="9" height="5" rx="1" fill="#fff" stroke="#888" /><path d="M3.500 1v1.500M6 1v1.500M8.500 1v1.500M3.500 8v1.500M6 8v1.500M8.500 8v1.500" stroke="#888" /></svg></button>
              </li>
            </ul>
          </div>
        </section>
      </aside>
      <div class="vsplit"></div>
      <div class="canvas">
        <svg viewBox="149 97 1385 704" role="img" aria-label="地図">
          <path d="M749 305.500L775 321 711 399A92 92 0 01701 518.500 122.200 122.200 0 01749 305.500z" fill="#0aebc1" stroke="#27443f" stroke-width=".9" />
          <path d="M656 415.500L679 435 711 399M681 434.500L743 361" fill="none" stroke="#17463d" stroke-width=".8" />
          <path :d="hatch" stroke="#222" stroke-width=".8" />
          <circle :cx="circle.x" :cy="circle.y" :r="circle.r" fill="none" stroke="#222" stroke-width=".9" />
          <path d="M836 531L852 522 876 495 886 481M657 408L677 353 704 325 735 309" fill="none" stroke="#333" stroke-width=".5" />
        </svg>
      </div>
    </main>

    <footer class="status">
      <div class="search">
        <svg viewBox="0 0 12 12"><circle cx="5" cy="5" r="3.600" fill="none" stroke="#888" stroke-width="1.200" /><path d="M8 8l3 3" stroke="#888" stroke-width="1.400" /></svg>
        <input type="text" placeholder="検索(Ctrl + K)" aria-label="検索">
      </div>
      <label class="first" for="coord">座標</label>
      <input id="coord" v-model="coord" class="box coord" type="text">
      <button class="sicon extent" aria-label="範囲表示の切替"><svg viewBox="0 0 14 14"><path d="M2 4l3-2 6 6-2 4-3 0-4-5z" fill="#ccc" stroke="#555" /><path d="M3 6l7-4M4 8l7-4M6 3l5 8" stroke="#444" /><circle cx="10.500" cy="9.500" r="2" fill="none" stroke="#444" /></svg></button>
      <label for="scale">縮尺</label>
      <div class="combo"><select id="scale"><option>1:335085</option></select><i class="tri"></i></div>
      <button class="sicon lock" aria-label="縮尺をロック"><svg viewBox="0 0 14 14"><path d="M4 7V4.500a3 3 0 016 0V7" fill="none" stroke="#777" stroke-width="1.500" /><rect x="2" y="6" width="10" height="7" rx="1" fill="#666" /></svg></button>
      <label for="magnify">拡大</label>
      <div class="spin"><input id="magnify" v-model="zoom" type="text"><span><i class="up"></i><i class="down"></i></span></div>
      <label for="rotate" class="rot">回転</label>
      <div class="spin"><input id="rotate" v-model="rotation" type="text"><span><i class="up"></i><i class="down"></i></span></div>
      <input id="render" v-model="render" type="checkbox" class="tick">
      <label for="render">レンダ</label>
      <button class="crs"><svg viewBox="0 0 14 14"><circle cx="7" cy="7" r="5" fill="#aaa" stroke="#666" /><path d="M1 7h12M7 2v10M3 4.500h8M3 9.500h8" stroke="#666" /><ellipse cx="7" cy="7" rx="2.500" ry="5" fill="none" stroke="#666" /></svg>EPSG:6677</button>
      <button class="sicon bubble" aria-label="メッセージ"><svg viewBox="0 0 14 14"><ellipse cx="7" cy="6.500" rx="6.500" ry="5" fill="#5d5d5d" /><path d="M8 10l4 3.500V9z" fill="#5d5d5d" /></svg></button>
    </footer>
  </div>
</template>

<style>
html, body, #app { height: 100%; }
body { margin: 0; overflow: hidden; }
</style>

<style scoped>
* { box-sizing: border-box; }
.app { height: 100%; display: flex; flex-direction: column; background: #efefef; color: #222; font: 9px/14px "Open Sans", "Noto Sans CJK JP", sans-serif; font-feature-settings: "palt"; }
.sprite { position: absolute; width: 0; height: 0; }
button { font: inherit; color: inherit; background: none; border: 0; padding: 0; margin: 0; display: flex; align-items: center; justify-content: center; }
svg { display: block; }

.title { height: 18px; flex: none; display: flex; align-items: center; background: linear-gradient(90deg, #e9f4fa, #e3f7f7 40%, #e8f4f9 65%, #e4f7f7); padding-right: 3px; }
.logo { width: 14px; height: 14px; margin-left: 2px; }
.caption { margin: 0 auto 0 4px; color: #111; }
.win { width: 36px; height: 18px; }
.win svg { width: 12px; height: 12px; }

.menu { height: 16px; flex: none; display: grid; grid-template-columns: 63px 41px 43px 44px 41px 58px 47px 44px 67px 45px 53px 69px 50px; padding-left: 7px; border-bottom: 1px solid #ddd; }
.menu button { justify-content: flex-start; white-space: nowrap; }

.bar { height: 31px; flex: none; display: flex; align-items: center; margin-right: 1px; background: linear-gradient(#fafafa, #ededed); border-bottom: 1px solid #c6c6c6; }
.bar + .bar { height: 32px; border-bottom: 2px solid #bcbcbc; }
.grip { width: 13px; height: 14px; flex: none; }
.grip::before { content: ""; display: block; width: 5px; height: 14px; margin-left: 7px; background: radial-gradient(circle at 1px 1px, #d8d8d8 1px, transparent 1px) 0 0 / 3px 3px; }
.grip:first-child { width: 10px; }
.grip:first-child::before { margin-left: 3px; }
.divider { width: 6px; height: 16px; flex: none; background: linear-gradient(#d2d2d2, #d2d2d2) center / 1px 100% no-repeat; }
.group { display: flex; justify-content: space-between; }
.g-file { width: 159px; }
.g-nav { width: 421px; }
.g-sel { width: 135px; }
.g-attr { width: 241px; }
.g-src { width: 185px; }
.g-edit { width: 361px; }
.g-lab { width: 53px; }
.g-lab5 { width: 132px; }
.tool { width: 26px; height: 26px; }
.tool.drop { width: 36px; padding-left: 3px; justify-content: flex-start; }
.tool.on { background: #dcdcdc; border: 1px solid #b5b5b5; border-radius: 2px; }
.ic { width: 20px; height: 20px; flex: none; }
.tri { border: 3px solid transparent; border-top-color: #555; border-bottom: 0; margin-left: 5px; }
.off .tri { border-top-color: #999; }

.body { flex: 1; min-height: 0; display: flex; }
.docks { width: 143px; flex: none; display: flex; flex-direction: column; }
.dock { display: flex; flex-direction: column; }
.browser { height: 187px; }
.layers { flex: 1; min-height: 0; }
h2 { margin: 0; height: 15px; flex: none; padding: 0 1px 0 3px; font: inherit; display: flex; gap: 2px; align-items: center; }
h2 button:first-of-type { margin-left: auto; }
h2 svg { width: 10px; height: 10px; }
.mini { height: 25px; flex: none; display: flex; align-items: center; padding-left: 5px; gap: 4px; }
.mini button { width: 16px; height: 16px; }
.mini svg { width: 13px; height: 13px; flex: none; }
.mini .wide { width: 28px; }
.mini .more { margin-left: auto; width: 14px; font-size: 12px; }

.tree { flex: 1; min-height: 0; display: grid; grid-template: 1fr 11px / 1fr 11px; border: 1px solid #bdbdbd; border-left-color: #ddd; background: #fff; }
.view { overflow: hidden; min-height: 0; }
.rows { margin: 0; padding: 0; list-style: none; display: grid; grid-auto-rows: 1fr; }
.ten { height: 144px; }
.eight { height: 115px; }
.rows li { display: flex; align-items: center; min-height: 0; white-space: nowrap; }
.twist { width: 14px; flex: none; }
.twist svg { width: 6px; height: 8px; margin-left: 3px; }
.node { width: 14px; height: 13px; flex: none; margin-right: 4px; }
.vscroll { display: flex; flex-direction: column; background: #ddd; border-left: 1px solid #c4c4c4; }
.vscroll button { height: 11px; background: #fafafa; border-bottom: 1px solid #ccc; }
.vscroll svg { width: 7px; height: 5px; }
.vthumb { height: 57px; margin-bottom: auto; background: #f8f8f8; border-bottom: 1px solid #c4c4c4; }
.hscroll { display: flex; background: #ddd; border-top: 1px solid #c4c4c4; }
.hscroll button { width: 11px; background: #fafafa; }
.hscroll svg { width: 5px; height: 7px; }
.hthumb { flex: 1; margin-right: 9px; background: #f8f8f8; border: 1px solid #c8c8c8; border-width: 0 1px; }
.corner { background: #efefef; }
.split { height: 5px; flex: none; background: radial-gradient(circle at 1px 2px, #d0d0d0 1px, transparent 1px) center / 15px 5px no-repeat; }

.list { flex: 1; border: 1px solid #bdbdbd; background: #fff; }
.rows .fold { width: 18px; flex: none; }
.fold svg { width: 7px; height: 5px; margin-left: 4px; }
.list label { font-style: italic; color: #777; }
.list .shown label { font-style: normal; font-weight: bold; color: #111; }
.list .current { background: #0a78d7; }
.list .current label { color: #fff; font-weight: normal; text-decoration: underline; }
.sym { width: 14px; height: 14px; flex: none; margin: 0 4px 0 3px; }
.tick { appearance: none; width: 12px; height: 12px; flex: none; margin: 0; background: #fff; border: 1px solid #c3c3c3; border-radius: 1px; display: flex; align-items: center; justify-content: center; }
.tick:checked::before { content: ""; flex: none; width: 5px; height: 8px; border: solid #111; border-width: 0 2px 2px 0; transform: rotate(35deg); margin-bottom: 2px; }
.temp { width: 13px; height: 13px; margin: 0 4px 0 auto; background: #f1f1f1; }
.temp svg { width: 12px; height: 10px; }

.vsplit { width: 5px; flex: none; background: radial-gradient(circle at 2px 1px, #c8c8c8 1px, transparent 1px) center / 5px 3px no-repeat; }
.canvas { flex: 1; min-width: 0; margin-right: 1px; background: #fff; border: 1px solid #c0c0c0; border-top: 0; }
.canvas svg { width: 100%; height: 100%; }

.status { height: 24px; flex: none; display: flex; align-items: center; padding: 0 6px 0 3px; font: 9px/12px "Liberation Sans", "Noto Sans CJK JP", sans-serif; font-feature-settings: "palt"; color: #111; white-space: nowrap; }
.status input, .status select { font: inherit; color: inherit; min-width: 0; }
.search { display: flex; align-items: center; width: 160px; height: 18px; padding-left: 6px; background: #fff; border: 1px solid #b4b4b4; border-radius: 2px; }
.search svg { width: 11px; height: 11px; flex: none; }
.status .search input { flex: 1; border: 0; padding: 0 0 0 5px; background: none; outline: 0; font-size: 10px; }
.search input::placeholder { color: #777; opacity: 1; }
.status .first { margin-left: auto; }
.box, .combo, .spin { height: 17px; background: #fff; border: 1px solid #b8b8b8; border-radius: 2px; }
.coord { width: 71px; margin-left: 4px; padding: 0 2px; }
.sicon { flex: none; }
.sicon svg { width: 14px; height: 14px; }
.extent { margin: 0 9px 0 3px; }
.combo { display: flex; align-items: center; width: 63px; margin-left: 3px; }
.combo select { appearance: none; flex: 1; height: 15px; border: 0; border-right: 1px solid #ccc; padding: 0 1px; background: none; }
.combo .tri { margin: 0 4px; }
.lock { margin: 0 5px 0 8px; }
.lock svg { width: 12px; }
.spin { display: flex; width: 67px; margin-left: 3px; }
.spin input { flex: 1; border: 0; padding: 0 2px; background: none; }
.spin span { width: 12px; display: flex; flex-direction: column; justify-content: center; align-items: center; gap: 3px; border-left: 1px solid #ccc; background: #f4f4f4; }
.up, .down { border: 3px solid transparent; }
.up { border-bottom-color: #555; border-top: 0; }
.down { border-top-color: #555; border-bottom: 0; }
.rot { margin: 0 4px 0 6px; }
.status .tick { margin: 0 2px 0 4px; }
.crs { margin-left: 8px; font: inherit; }
.crs svg { width: 13px; height: 13px; }
.bubble { margin-left: 17px; }
</style>
